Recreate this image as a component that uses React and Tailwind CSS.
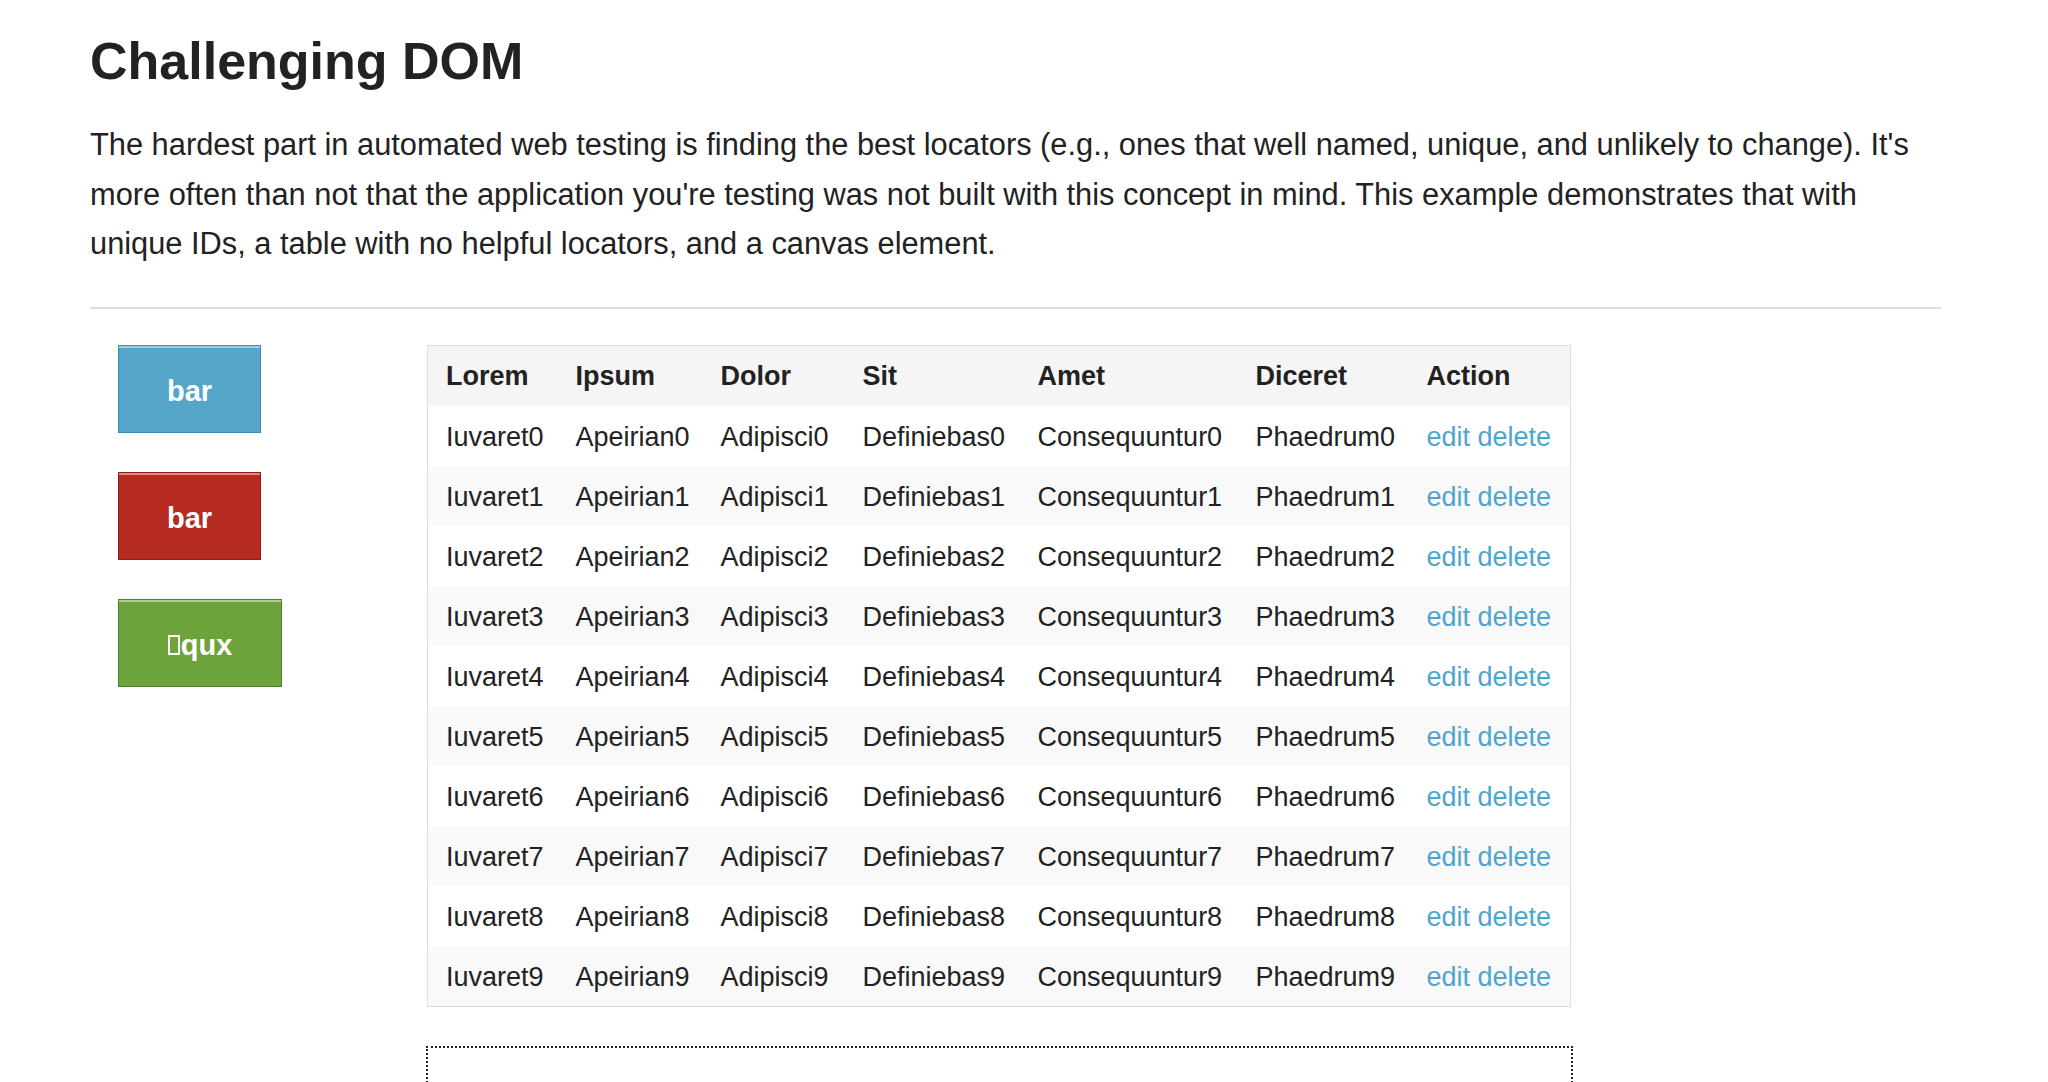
const headers = ["Lorem", "Ipsum", "Dolor", "Sit", "Amet", "Diceret", "Action"];
const widths = ["w-[130px]", "w-[145px]", "w-[142px]", "w-[175px]", "w-[218px]", "w-[171px]", "w-[162px]"];

const rows = Array.from({ length: 10 }, (_, i) => [
  `Iuvaret${i}`,
  `Apeirian${i}`,
  `Adipisci${i}`,
  `Definiebas${i}`,
  `Consequuntur${i}`,
  `Phaedrum${i}`,
]);

export default function App() {
  return (
    <div className="min-h-screen bg-white text-[#222222] font-['Liberation_Sans',Arial,sans-serif]">
      <div className="ml-[90px] w-[1851px]">
        <h3 className="pt-[30px] text-[52px] leading-[62px] font-bold">Challenging DOM</h3>
        <p className="mt-[28px] text-[30.8px] leading-[49.6px]">
          The hardest part in automated web testing is finding the best locators (e.g., ones that well named,
          unique, and unlikely to change). It's more often than not that the application you're testing was not
          built with this concept in mind. This example demonstrates that with unique IDs, a table with no helpful
          locators, and a canvas element.
        </p>
        <hr className="mt-[38px] border-0 border-t-2 border-[#dddddd]" />

        <div className="mt-[36px] flex">
          {/* buttons column */}
          <div className="w-[337px] pl-[28px] flex flex-col items-start gap-[39px]">
            <a className="flex h-[88px] w-[143px] items-center justify-center border border-[#3d8ab0] bg-[#55a5c9] pt-[5px] text-[29px] font-bold text-white shadow-[inset_0_2px_0_rgba(255,255,255,0.45)]">
              bar
            </a>
            <a className="flex h-[88px] w-[143px] items-center justify-center border border-[#8e1f18] bg-[#b52b22] pt-[5px] text-[29px] font-bold text-white shadow-[inset_0_2px_0_rgba(255,255,255,0.45)]">
              bar
            </a>
            <a className="flex h-[88px] w-[164px] items-center justify-center border border-[#4f7f2b] bg-[#6da33b] pt-[5px] text-[29px] font-bold text-white shadow-[inset_0_2px_0_rgba(255,255,255,0.45)]">
              <span className="mr-[1px] inline-block h-[20px] w-[12px] border-2 border-white"></span>
              qux
            </a>
          </div>

          {/* table + canvas column */}
          <div className="flex flex-col">
            <table className="table-fixed w-[1143px] border border-[#dddddd] text-[27px] text-left">
              <thead className="bg-[#f5f5f5]">
                <tr className="h-[61px]">
                  {headers.map((h, i) => (
                    <th key={h} className={`${widths[i]} px-[18px] pt-[1px] font-bold`}>
                      {h}
                    </th>
                  ))}
                </tr>
              </thead>
              <tbody>
                {rows.map((r, i) => (
                  <tr key={i} className={`h-[60px] ${i % 2 === 1 ? "bg-[#f9f9f9]" : "bg-white"}`}>
                    {r.map((c) => (
                      <td key={c} className="px-[18px] pt-[2px] whitespace-nowrap">
                        {c}
                      </td>
                    ))}
                    <td className="px-[18px] pt-[2px] whitespace-nowrap text-[#4ea5cd]">
                      <a>edit</a> <a>delete</a>
                    </td>
                  </tr>
                ))}
              </tbody>
            </table>

            <div className="mt-[39px] ml-[-1px] h-[400px] w-[1147px] border-2 border-dotted border-[#222222]"></div>
          </div>
        </div>
      </div>
    </div>
  );
}
